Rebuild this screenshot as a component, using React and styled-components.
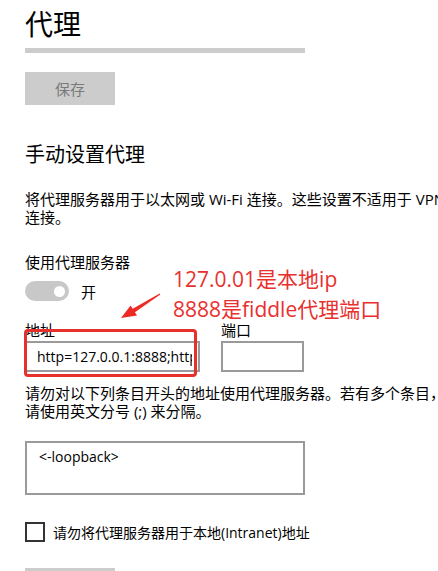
import React from "react";
import styled, { createGlobalStyle } from "styled-components";

const Global = createGlobalStyle`
  html, body {
    margin: 0;
    padding: 0;
    background: #fff;
  }
  body {
    font-family: "Open Sans", "Noto Sans CJK SC", sans-serif;
    color: #000;
  }
`;

const Page = styled.div`
  position: relative;
  width: 438px;
  height: 571px;
  overflow: hidden;
  padding: 10px 0 0 25px;
  box-sizing: border-box;
  background: #fff;
`;

const Title = styled.h1`
  margin: 0;
  font-size: 28px;
  line-height: 28px;
  font-weight: 400;
`;

const CutBar = styled.div`
  margin-top: 10px;
  width: 280px;
  height: 5px;
  background: #cccccc;
`;

const Button = styled.button`
  display: block;
  margin-top: ${(p) => p.$top}px;
  width: 90px;
  height: 33px;
  border: 0;
  padding: 0;
  background: #cccccc;
  color: #7a7a7a;
  font-family: inherit;
  font-size: 15px;
`;

const Heading = styled.h2`
  margin: 38px 0 0;
  font-size: 20px;
  line-height: 24px;
  font-weight: 400;
`;

const Para = styled.p`
  margin: ${(p) => p.$top}px 0 0;
  font-size: 15px;
  line-height: 18px;
  white-space: nowrap;
  span {
    display: block;
  }
`;

const Label = styled.div`
  margin-top: ${(p) => p.$top || 0}px;
  font-size: 15px;
  line-height: 18px;
`;

const ToggleRow = styled.div`
  margin-top: 10px;
  display: flex;
  align-items: center;
  gap: 12px;
  height: 20px;
  font-size: 15px;
`;

const Track = styled.div`
  position: relative;
  width: 44px;
  height: 20px;
  border-radius: 10px;
  background: #c8c8c8;
`;

const Knob = styled.div`
  position: absolute;
  right: 4px;
  top: 4.5px;
  width: 11px;
  height: 11px;
  border-radius: 50%;
  background: #fff;
`;

const Fields = styled.div`
  margin-top: 20px;
  display: flex;
  gap: 21px;
`;

const Field = styled.div`
  position: relative;
  display: flex;
  flex-direction: column;
  gap: 2px;
`;

const TextBox = styled.input`
  box-sizing: border-box;
  width: ${(p) => p.$w}px;
  height: 31px;
  border: 2px solid #9a9a9a;
  padding: 0 6px 0 10px;
  margin: 0;
  font-family: "Open Sans", "Noto Sans CJK SC", sans-serif;
  font-size: 14px;
  color: #000;
  background: #fff;
  outline: none;
`;

const Area = styled.textarea`
  display: block;
  box-sizing: border-box;
  margin-top: 21px;
  width: 280px;
  height: 54px;
  border: 2px solid #9a9a9a;
  padding: 5px 12px;
  font-family: "Open Sans", "Noto Sans CJK SC", sans-serif;
  font-size: 14px;
  line-height: 18px;
  resize: none;
  outline: none;
`;

const CheckRow = styled.label`
  margin-top: 27px;
  display: flex;
  align-items: center;
  gap: 8px;
  height: 20px;
  font-size: 14px;
`;

const Box = styled.span`
  box-sizing: border-box;
  width: 20px;
  height: 20px;
  border: 2px solid #333;
`;

// red annotation drawn over the screenshot
const Mark = styled.div`
  position: absolute;
  left: -1px;
  top: 8px;
  width: 173px;
  height: 48px;
  box-sizing: border-box;
  border: 3px solid #e5302c;
  border-radius: 4px;
  pointer-events: none;
`;

const Note = styled.div`
  position: absolute;
  left: 173px;
  top: 264px;
  color: #e8312f;
  font-size: 21px;
  line-height: 30px;
  white-space: nowrap;
`;

const Arrow = styled.svg`
  position: absolute;
  left: 115px;
  top: 285px;
`;

export default function App() {
  return (
    <>
      <Global />
      <Page>
        <Title>代理</Title>
        <CutBar />
        <Button $top={19}>保存</Button>

        <Heading>手动设置代理</Heading>
        <Para $top={23}>
          <span>将代理服务器用于以太网或 Wi-Fi 连接。这些设置不适用于 VPN</span>
          <span>连接。</span>
        </Para>

        <Label $top={27}>使用代理服务器</Label>
        <ToggleRow>
          <Track>
            <Knob />
          </Track>
          开
        </ToggleRow>

        <Fields>
          <Field>
            <Label>地址</Label>
            <TextBox $w={175} readOnly value="http=127.0.0.1:8888;http=127.0.0.1:8888" />
            <Mark />
          </Field>
          <Field>
            <Label>端口</Label>
            <TextBox $w={83} readOnly value="" />
          </Field>
        </Fields>

        <Para $top={12}>
          <span>请勿对以下列条目开头的地址使用代理服务器。若有多个条目，</span>
          <span>请使用英文分号 (;) 来分隔。</span>
        </Para>
        <Area readOnly value="<-loopback>" />

        <CheckRow>
          <Box />
          请勿将代理服务器用于本地(Intranet)地址
        </CheckRow>
        <Button $top={26}>保存</Button>

        <Note>
          <div>127.0.01是本地ip</div>
          <div>8888是fiddle代理端口</div>
        </Note>
        <Arrow width="50" height="40" viewBox="0 0 50 40">
          <polygon
            points="45.3,9.4 19.9,27.2 22,30.6 6,33 15.6,20.4 17.7,23.8 44.7,8.6"
            fill="#ee2a24"
          />
        </Arrow>
      </Page>
    </>
  );
}
